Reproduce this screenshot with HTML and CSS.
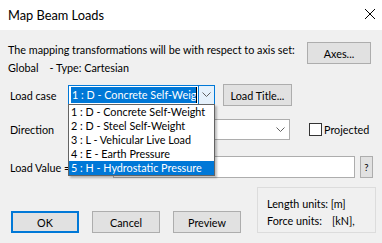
FILE: index.html
```html
<!DOCTYPE html>
<html>
<head>
<meta charset="utf-8">
<link rel="stylesheet" href="styles.css">
</head>
<body>
<div class="window">
  <div class="titlebar">
    <span class="title">Map Beam Loads</span>
    <svg class="close" width="12" height="12" viewBox="0 0 12 12"><path d="M1 1 L11 11 M11 1 L1 11" stroke="#000" stroke-width="1" fill="none"/></svg>
  </div>
  <div class="content">
    <div class="row row-axis">
      <div class="axis-text">
        <div>The mapping transformations will be with respect to axis set:</div>
        <div>Global&nbsp;&nbsp;&nbsp; - Type: Cartesian</div>
      </div>
      <button class="btn btn-axes">Axes...</button>
    </div>
    <div class="row row-case">
      <span class="label">Load case</span>
      <div class="combo combo-case focused">
        <div class="combo-value"><span class="sel-text">1 : D - Concrete Self-Weig</span></div>
        <div class="combo-arrow"><svg width="9" height="6" viewBox="0 0 9 6"><path d="M0.5 0.5 L4.5 4.5 L8.5 0.5" stroke="#606060" fill="none"/></svg></div>
        <ul class="droplist">
          <li>1 : D - Concrete Self-Weight</li>
          <li>2 : D - Steel Self-Weight</li>
          <li>3 : L - Vehicular Live Load</li>
          <li>4 : E - Earth Pressure</li>
          <li class="hl">5 : H - Hydrostatic Pressure</li>
        </ul>
      </div>
      <button class="btn btn-title">Load Title...</button>
    </div>
    <div class="row row-dir">
      <span class="label">Direction</span>
      <div class="combo combo-dir">
        <div class="combo-value"></div>
        <div class="combo-arrow plain"><svg width="9" height="6" viewBox="0 0 9 6"><path d="M0.5 0.5 L4.5 4.5 L8.5 0.5" stroke="#606060" fill="none"/></svg></div>
      </div>
      <label class="check"><span class="box"></span>Projected</label>
    </div>
    <div class="row row-value">
      <span class="label label-value">Load Value =</span>
      <div class="textbox"></div>
      <button class="btn btn-q">?</button>
    </div>
    <div class="row row-bottom">
      <div class="buttons">
        <button class="btn btn-main btn-ok">OK</button>
        <button class="btn btn-main">Cancel</button>
        <button class="btn btn-main">Preview</button>
      </div>
      <div class="units">
        <div>Length units: [m]</div>
        <div>Force units:<span class="unit-gap">[kN],</span></div>
      </div>
    </div>
  </div>
</div>
</body>
</html>
```

FILE: styles.css
```css
* { box-sizing: border-box; }
html, body { margin: 0; padding: 0; }
body {
  font-family: Lato, "Noto Sans", sans-serif;
  font-size: 10.8px;
  color: #000;
  background: #f0f0f0;
}
.window {
  width: 382px;
  height: 243px;
  background: #f0f0f0;
  overflow: hidden;
}
.titlebar {
  height: 30px;
  background: #fff;
  display: flex;
  align-items: center;
  justify-content: space-between;
  padding: 0 6px 0 8px;
}
.title { font-size: 12.8px; }
.close { margin-top: -2px; }
.content { padding: 0 6px 0 10px; }
.row { display: flex; }
.row-axis {
  margin-top: 11px;
  height: 36px;
  align-items: flex-start;
  margin-left: -2px;
}
.axis-text { line-height: 18px; flex: 1; white-space: nowrap; }
.btn {
  font-family: inherit;
  font-size: 10.8px;
  background: #e1e1e1;
  border: 1px solid #adadad;
  color: #000;
  padding: 0;
  margin: 0;
  height: 22px;
  white-space: nowrap;
}
.btn-axes { width: 64px; margin-top: 1px; margin-right: 5px; flex: none; }
.row-case { margin-top: 7px; height: 22px; align-items: center; }
.label { width: 58px; flex: none; white-space: nowrap; }
.combo {
  position: relative;
  display: flex;
  height: 20px;
  border: 1px solid #adadad;
  background: #fff;
  flex: none;
}
.combo-case { width: 147px; border-color: #0078d7; }
.combo-value { flex: 1; padding: 1px 1px 1px 2px; }
.sel-text {
  display: block;
  height: 16px;
  line-height: 16px;
  background: #0078d7;
  color: #fff;
  padding-left: 1px;
  white-space: nowrap;
  overflow: hidden;
  width: 126px;
  border-right: 1px solid #000;
}
.combo-arrow {
  width: 16px;
  display: flex;
  align-items: center;
  justify-content: center;
  border-left: 1px solid #0078d7;
  background: #e5f1fb;
}
.combo-arrow.plain { border-left: none; background: #fff; width: 17px; }
.droplist {
  position: absolute;
  left: -1px;
  top: 18px;
  width: 147px;
  margin: 0;
  padding: 0;
  list-style: none;
  background: #fff;
  border: 1px solid #646464;
  box-shadow: 2px 2px 2px rgba(0,0,0,0.25);
  z-index: 5;
}
.droplist li {
  height: 14px;
  line-height: 14px;
  padding-left: 2px;
  white-space: nowrap;
  overflow: hidden;
}
.droplist li.hl { background: #0078d7; color: #fff; }
.btn-title { width: 69px; margin-left: 8px; flex: none; }
.row-dir { margin-top: 13px; height: 21px; align-items: center; }
.combo-dir { width: 222px; height: 21px; }
.check { display: flex; align-items: center; margin-left: 19px; white-space: nowrap; }
.box {
  width: 13px;
  height: 13px;
  border: 1px solid #333;
  background: #fff;
  margin-right: 2px;
}
.row-value { margin-top: 16px; height: 22px; align-items: center; }
.label-value { width: 103px; }
.textbox { width: 242px; height: 22px; border: 1px solid #adadad; background: #fff; flex: none; }
.btn-q { width: 13px; margin-left: 5px; font-size: 9.5px; flex: none; }
.row-bottom {
  margin-top: 9px;
  height: 46px;
  align-items: flex-end;
  justify-content: space-between;
}
.buttons { display: flex; gap: 13px; margin-left: 1px; }
.btn-main { width: 68px; }
.btn-ok { border-color: #0078d7; box-shadow: inset 0 0 0 1px #0078d7; }
.units {
  width: 119px;
  height: 46px;
  border: 1px solid #dcdcdc;
  padding: 7px 0 0 9px;
  line-height: 17px;
  white-space: nowrap;
}
.unit-gap { margin-left: 10px; }
```
